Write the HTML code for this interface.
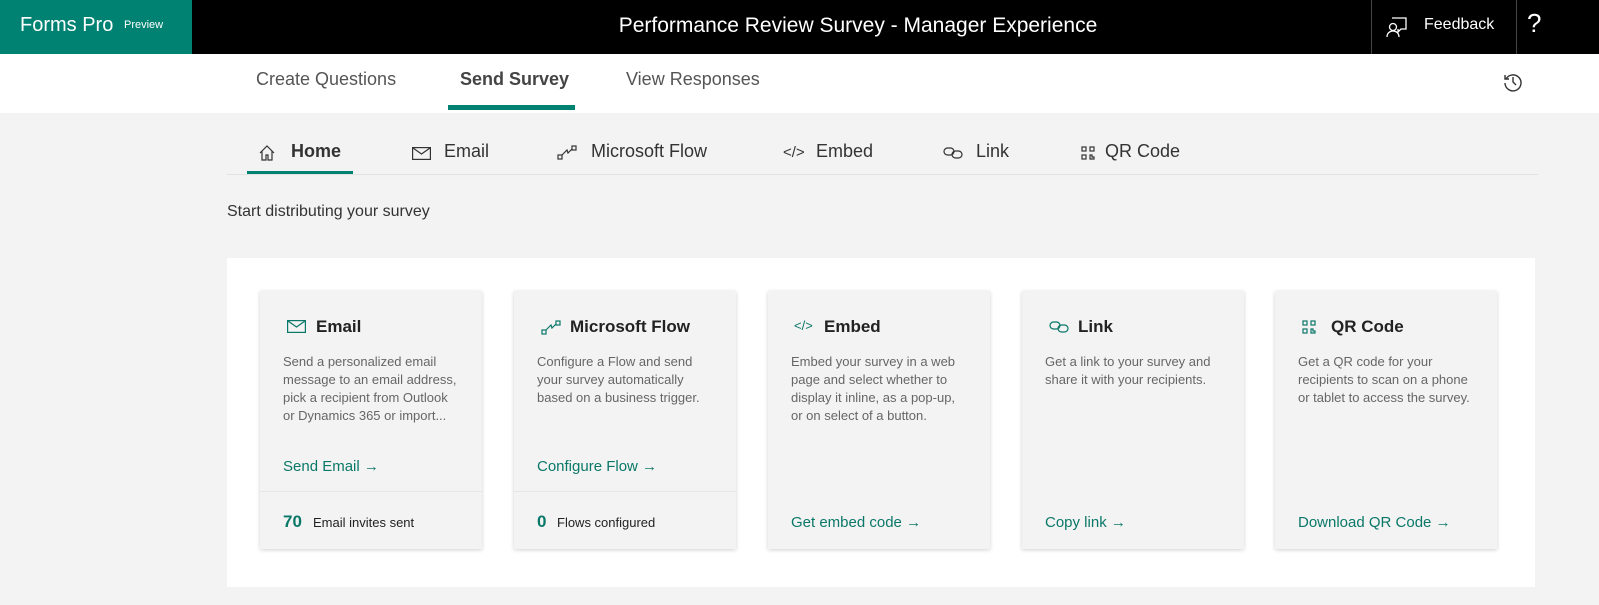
<!DOCTYPE html>
<html><head><meta charset="utf-8"><style>
*{box-sizing:border-box;margin:0;padding:0}
body{width:1599px;height:605px;overflow:hidden;background:#f3f3f3;font-family:"Segoe UI","Liberation Sans",sans-serif;color:#333;position:relative}
.top{position:absolute;left:0;top:0;width:1599px;height:54px;background:#000;color:#fff}
.brand{position:absolute;left:0;top:0;width:192px;height:54px;background:#008272;color:#fff}
.brand .n{position:absolute;left:20px;top:14px;font-size:20px}
.brand .p{position:absolute;left:124px;top:19px;font-size:11px}
.title{position:absolute;left:0;width:1716px;text-align:center;top:14px;font-size:21px}
.fb{position:absolute;left:1371px;top:0;height:54px;border-left:1px solid #444;border-right:1px solid #444;width:146px}
.fb span{position:absolute;left:52px;top:16px;font-size:16px}
.q{position:absolute;left:1527px;top:8px;font-size:26px;font-weight:300}
.tabs{position:absolute;top:54px;left:0;width:1599px;height:59px;background:#fff}
.t{position:absolute;top:15px;font-size:18px;color:#555}
.ul{position:absolute;height:5px;background:#008272}
.st{position:absolute;top:141px;font-size:18px;color:#333}
.panel{position:absolute;left:227px;top:258px;width:1308px;height:329px;background:#fff}
.card{position:absolute;top:291px;width:222px;height:258px;background:#f3f3f3;box-shadow:0 1px 4px rgba(0,0,0,.18)}
.card h3{position:absolute;left:56px;top:26px;font-size:17px;font-weight:600;color:#222}
.card svg.ic{position:absolute;left:27px;top:29px}
.card p{position:absolute;left:23px;top:62px;width:178px;font-size:13px;line-height:18px;color:#666}
.card a{position:absolute;left:23px;font-size:15px;color:#0a7868;text-decoration:none}
.card .f{position:absolute;left:0;top:200px;width:222px;height:58px;border-top:1px solid #e6e6e6}
.f b{position:absolute;left:23px;top:20px;font-size:17px;color:#0a7868;font-weight:600}
.f span{position:absolute;top:23px;font-size:13px;color:#222}
</style></head><body>
<div class="top">
<div class="brand"><span class="n">Forms Pro</span><span class="p">Preview</span></div>
<div class="title">Performance Review Survey - Manager Experience</div>
<div class="fb"><svg style="position:absolute;left:14px;top:16px" width="22" height="22" viewBox="0 0 22 22" fill="none" stroke="#fff" stroke-width="1.3"><path d="M6 2h14v11h-5l-3 3v-3"/><circle cx="7" cy="11" r="3.5"/><path d="M1 21c0-4 3-6 6-6s6 2 6 6"/></svg><span>Feedback</span></div>
<div class="q">?</div>
</div>
<div class="tabs">
<div class="t" style="left:256px">Create Questions</div>
<div class="t" style="left:460px;font-weight:600;color:#444">Send Survey</div>
<div class="ul" style="left:448px;top:51px;width:127px"></div>
<div class="t" style="left:626px">View Responses</div>
<svg style="position:absolute;left:1503px;top:18px" width="20" height="20" viewBox="0 0 20 20" fill="none" stroke="#333" stroke-width="1.4"><path d="M3 7a8 8 0 1 1-1 4"/><path d="M2 3v4h4"/><path d="M10 5v5l3 3"/></svg>
</div>
<svg style="position:absolute;left:259px;top:145px" width="16" height="16" viewBox="0 0 16 16" fill="none" stroke="#333" stroke-width="1.2"><path d="M1 8L8 1l7 7M3 6v9h4v-5h2v5h4V6"/></svg>
<div class="st" style="left:291px;font-weight:600">Home</div>
<svg style="position:absolute;left:412px;top:147px" width="19" height="13" viewBox="0 0 19 13" fill="none" stroke="#333" stroke-width="1.2"><rect x=".6" y=".6" width="17.8" height="11.8"/><path d="M1 1l8.5 6L18 1"/></svg>
<div class="st" style="left:444px">Email</div>
<svg style="position:absolute;left:557px;top:145px" width="20" height="16" viewBox="0 0 20 16" fill="none" stroke="#333" stroke-width="1.2"><rect x="1" y="10" width="4" height="4"/><rect x="15" y="1" width="4" height="4"/><path d="M5 10l5-5 1 3 4-4"/></svg>
<div class="st" style="left:591px">Microsoft Flow</div>
<div class="st" style="left:783px;font-size:15px;top:144px">&lt;/&gt;</div>
<div class="st" style="left:816px">Embed</div>
<svg style="position:absolute;left:943px;top:146px" width="20" height="14" viewBox="0 0 20 14" fill="none" stroke="#333" stroke-width="1.2"><rect x="1" y="2" width="10" height="7" rx="3.5"/><rect x="9" y="5" width="10" height="7" rx="3.5"/></svg>
<div class="st" style="left:976px">Link</div>
<svg style="position:absolute;left:1081px;top:146px" width="14" height="14" viewBox="0 0 14 14" fill="none" stroke="#333" stroke-width="1.2"><rect x="1" y="1" width="4" height="4"/><rect x="9" y="1" width="4" height="4"/><rect x="1" y="9" width="4" height="4"/><path d="M9 9h2v2h2v2h-4z"/></svg>
<div class="st" style="left:1105px">QR Code</div>
<div class="ul" style="left:247px;top:171px;width:106px;height:3px"></div>
<div style="position:absolute;left:227px;top:174px;width:1311px;height:1px;background:#e3e3e3"></div>
<div style="position:absolute;left:227px;top:203px;font-size:16px;color:#333">Start distributing your survey</div>
<div class="panel"></div>

<div class="card" style="left:260px"><svg class="ic" width="19" height="13" viewBox="0 0 19 13" fill="none" stroke="#0a7868" stroke-width="1.2"><rect x=".6" y=".6" width="17.8" height="11.8"/><path d="M1 1l8.5 6L18 1"/></svg><h3>Email</h3><p>Send a personalized email message to an email address, pick a recipient from Outlook or Dynamics 365 or import...</p><a style="top:167px">Send Email →</a><div class="f"><b>70</b><span style="left:53px">Email invites sent</span></div></div>

<div class="card" style="left:514px"><svg class="ic" width="20" height="16" viewBox="0 0 20 16" fill="none" stroke="#0a7868" stroke-width="1.2"><rect x="1" y="10" width="4" height="4"/><rect x="15" y="1" width="4" height="4"/><path d="M5 10l5-5 1 3 4-4"/></svg><h3>Microsoft Flow</h3><p>Configure a Flow and send your survey automatically based on a business trigger.</p><a style="top:167px">Configure Flow →</a><div class="f"><b>0</b><span style="left:43px">Flows configured</span></div></div>

<div class="card" style="left:768px"><span style="position:absolute;left:26px;top:27px;font-size:13px;color:#0a7868">&lt;/&gt;</span><h3>Embed</h3><p>Embed your survey in a web page and select whether to display it inline, as a pop-up, or on select of a button.</p><a style="top:223px">Get embed code →</a></div>

<div class="card" style="left:1022px"><svg class="ic" width="20" height="14" viewBox="0 0 20 14" fill="none" stroke="#0a7868" stroke-width="1.2"><rect x="1" y="2" width="10" height="7" rx="3.5"/><rect x="9" y="5" width="10" height="7" rx="3.5"/></svg><h3>Link</h3><p>Get a link to your survey and share it with your recipients.</p><a style="top:223px">Copy link →</a></div>

<div class="card" style="left:1275px"><svg class="ic" width="14" height="14" viewBox="0 0 14 14" fill="none" stroke="#0a7868" stroke-width="1.2"><rect x="1" y="1" width="4" height="4"/><rect x="9" y="1" width="4" height="4"/><rect x="1" y="9" width="4" height="4"/><path d="M9 9h2v2h2v2h-4z"/></svg><h3>QR Code</h3><p>Get a QR code for your recipients to scan on a phone or tablet to access the survey.</p><a style="top:223px">Download QR Code →</a></div>
</body></html>
